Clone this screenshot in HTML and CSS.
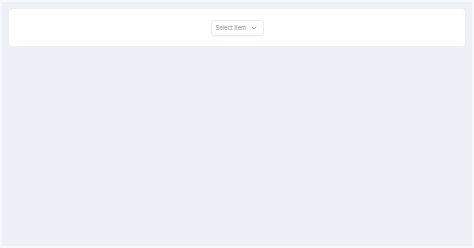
FILE: index.html
```html
<!DOCTYPE html>
<html>
<head>
<meta charset="utf-8">
<link rel="stylesheet" href="styles.css">
</head>
<body>
<div class="page">
  <div class="card">
    <div class="select">
      <span class="label">Select Item</span>
      <svg class="chev" width="6" height="4" viewBox="0 0 6 4"><path d="M1 1 L3 3 L5 1" fill="none" stroke="#8a8f98" stroke-width="0.9" stroke-linecap="round" stroke-linejoin="round"/></svg>
    </div>
  </div>
</div>
</body>
</html>
```
FILE: styles.css
```css
html, body { margin: 0; padding: 0; height: 100%; }
body {
  background: #f6f8fb;
  font-family: Inter, "Noto Sans", sans-serif;
  padding: 2px;
  box-sizing: border-box;
}
.page {
  background: #edf0f6;
  height: 100%;
  padding: 7px;
  box-sizing: border-box;
}
.card {
  background: #ffffff;
  border-radius: 4px;
  height: 37px;
  display: flex;
  align-items: center;
  justify-content: center;
}
.select {
  width: 53px;
  height: 16px;
  box-sizing: border-box;
  border: 1px solid #e8ebf0;
  border-radius: 3px;
  display: flex;
  align-items: center;
  justify-content: space-between;
  padding: 0 6px 0 4px;
  box-shadow: 0 1px 2px rgba(0,0,0,0.04);
}
.label {
  font-size: 5.8px;
  color: #8b9099;
  white-space: nowrap;
}
.chev { display: block; }
```
